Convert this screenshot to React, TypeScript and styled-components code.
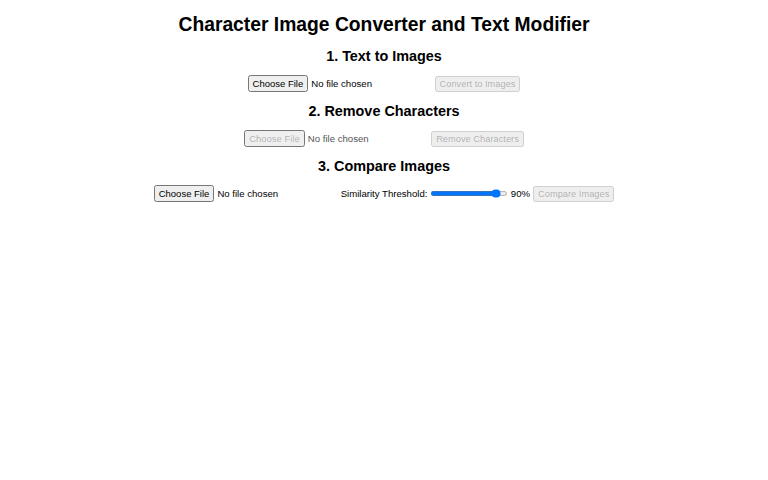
import React from "react";
import styled, { createGlobalStyle } from "styled-components";

const GlobalStyle = createGlobalStyle`
  html, body {
    margin: 0;
    padding: 0;
    background: #ffffff;
  }
  body {
    font-family: "Liberation Sans", Arial, sans-serif;
    color: #000000;
  }
`;

const Page = styled.div`
  display: flex;
  flex-direction: column;
  align-items: center;
  padding-top: 13px;
`;

const Title = styled.h1`
  margin: 0 0 11px;
  font-size: 19.3px;
  font-weight: bold;
  line-height: 23px;
`;

const Section = styled.section`
  display: flex;
  flex-direction: column;
  align-items: center;
  margin-bottom: 10px;
`;

const Heading = styled.h2`
  margin: 0 0 10px;
  font-size: 14.4px;
  font-weight: bold;
  line-height: 18px;
`;

const Row = styled.div`
  display: flex;
  align-items: center;
  gap: 3px;
  font-size: 9.6px;
`;

const FileInput = styled.input.attrs({ type: "file" })`
  font-family: "Liberation Sans", Arial, sans-serif;
  font-size: 9.6px;
  width: 184px;

  &::file-selector-button {
    font-family: "Liberation Sans", Arial, sans-serif;
    font-size: 9.5px;
    padding: 1px 3px;
    margin-right: 3px;
  }
`;

const Button = styled.button`
  font-family: "Liberation Sans", Arial, sans-serif;
  font-size: 9.3px;
  padding: 1px 3px;
`;

const Label = styled.label`
  font-size: 9.6px;
`;

const Slider = styled.input.attrs({ type: "range" })`
  width: 129px;
  margin: 0;
  zoom: 0.6;
`;

const Value = styled.span`
  font-size: 9.6px;
`;

export default function App() {
  return (
    <>
      <GlobalStyle />
      <Page>
        <Title>Character Image Converter and Text Modifier</Title>
        <Section>
          <Heading>1. Text to Images</Heading>
          <Row>
            <FileInput accept=".txt" />
            <Button disabled>Convert to Images</Button>
          </Row>
        </Section>
        <Section>
          <Heading>2. Remove Characters</Heading>
          <Row>
            <FileInput disabled />
            <Button disabled>Remove Characters</Button>
          </Row>
        </Section>
        <Section>
          <Heading>3. Compare Images</Heading>
          <Row>
            <FileInput accept="image/*" />
            <Label>Similarity Threshold:</Label>
            <Slider min={0} max={100} defaultValue={90} />
            <Value>90%</Value>
            <Button disabled>Compare Images</Button>
          </Row>
        </Section>
      </Page>
    </>
  );
}
